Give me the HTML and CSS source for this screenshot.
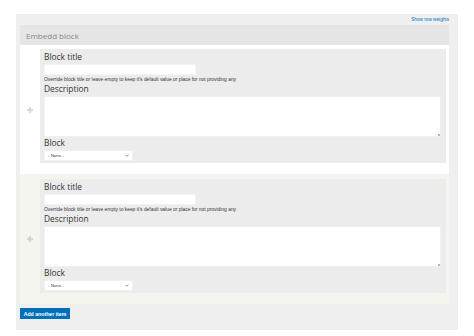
FILE: index.html
```html
<!DOCTYPE html>
<html lang="en">
    <head>
        <meta charset="utf-8">
        <meta name="viewport" content="width=device-width, initial-scale=1" />
        <title>Embedd block</title>
        <link rel="stylesheet" href="styles.css">
    </head>
    <body>
        <div class="field-wrapper">
            <div class="weights"><a href="#">Show row weights</a></div>
            <table class="field-table">
                <thead>
                <tr>
                    <th colspan="2">Embedd block</th>
                </tr>
                </thead>
                <tbody>
                <tr class="odd">
                    <td class="handle-cell">
                        <svg class="handle" width="6" height="6" viewBox="0 0 12 12">
                            <path d="M6 1v10M1 6h10" stroke="#b0b0b0" stroke-width="1.3"/>
                            <path d="M4.2 2.6 6 0.6 7.8 2.6M4.2 9.4 6 11.4 7.8 9.4M2.6 4.2 0.6 6 2.6 7.8M9.4 4.2 11.4 6 9.4 7.8" fill="none" stroke="#b0b0b0" stroke-width="1.1"/>
                        </svg>
                    </td>
                    <td class="item-cell">
                        <div class="panel">
                            <label class="label">Block title</label>
                            <input class="text-input" type="text">
                            <div class="help">Override block title or leave empty to keep it's default value or place for not providing any</div>
                            <label class="label">Description</label>
                            <div class="textarea"><textarea></textarea><span class="grip"></span></div>
                            <label class="label">Block</label>
                            <div class="select">
                                <span>- None -</span>
                                <svg width="4" height="3" viewBox="0 0 10 6"><path d="M1 1l4 4 4-4" fill="none" stroke="#666" stroke-width="1.8"/></svg>
                            </div>
                        </div>
                    </td>
                </tr>
                <tr class="even">
                    <td class="handle-cell">
                        <svg class="handle" width="6" height="6" viewBox="0 0 12 12">
                            <path d="M6 1v10M1 6h10" stroke="#b0b0b0" stroke-width="1.3"/>
                            <path d="M4.2 2.6 6 0.6 7.8 2.6M4.2 9.4 6 11.4 7.8 9.4M2.6 4.2 0.6 6 2.6 7.8M9.4 4.2 11.4 6 9.4 7.8" fill="none" stroke="#b0b0b0" stroke-width="1.1"/>
                        </svg>
                    </td>
                    <td class="item-cell">
                        <div class="panel">
                            <label class="label">Block title</label>
                            <input class="text-input" type="text">
                            <div class="help">Override block title or leave empty to keep it's default value or place for not providing any</div>
                            <label class="label">Description</label>
                            <div class="textarea"><textarea></textarea><span class="grip"></span></div>
                            <label class="label">Block</label>
                            <div class="select">
                                <span>- None -</span>
                                <svg width="4" height="3" viewBox="0 0 10 6"><path d="M1 1l4 4 4-4" fill="none" stroke="#666" stroke-width="1.8"/></svg>
                            </div>
                        </div>
                    </td>
                </tr>
                </tbody>
            </table>
            <button class="add-more" type="button">Add another item</button>
        </div>
    </body>
</html>
```

FILE: styles.css
```css
body {
    margin: 0;
    background: #fff;
    font-family: "Liberation Sans", Arial, sans-serif;
    color: #333;
}
.field-wrapper {
    margin: 14px 16px 4px;
    padding: 0 9px 11px 4px;
    background: #efefef;
}
.weights {
    text-align: right;
    height: 11px;
    line-height: 11px;
    font-size: 4.7px;
}
.weights a {
    color: #0074bd;
    text-decoration: none;
}
.field-table {
    width: 100%;
    border-collapse: collapse;
    border-spacing: 0;
}
.field-table th {
    height: 20px;
    padding: 0 6px;
    background: #e5e5e5;
    color: #888;
    font-family: "Open Sans", sans-serif;
    font-weight: normal;
    font-size: 8px;
    text-align: left;
}
.field-table td { padding: 0; }
.odd { background: #fff; }
.even { background: #f5f5f0; }
.handle-cell {
    width: 20px;
    text-align: center;
    vertical-align: middle;
}
.handle { display: block; margin: 0 auto; }
.item-cell { padding: 4px 3px 11px 0 !important; }
.even .item-cell { padding-top: 5px !important; }
.panel {
    background: #ececec;
    padding: 2px 5px 2px 4px;
    display: flex;
    flex-direction: column;
    align-items: flex-start;
}
.label {
    display: block;
    font-family: "Open Sans", sans-serif;
    font-size: 8.4px;
    line-height: 11px;
    color: #333;
}
.text-input {
    box-sizing: border-box;
    margin: 2px 0 0;
    width: 152px;
    height: 11px;
    border: 1px solid #f4f4f4;
    background: #fff;
    padding: 0;
}
.help {
    margin-top: 2px;
    font-size: 4.9px;
    line-height: 6px;
    color: #333;
    white-space: nowrap;
}
.textarea {
    position: relative;
    margin-top: 2px;
    width: 397px;
    height: 41px;
}
.textarea textarea {
    box-sizing: border-box;
    display: block;
    width: 100%;
    height: 100%;
    margin: 0;
    padding: 0;
    border: 1px solid #f0f0f0;
    background: #fff;
    resize: none;
}
.grip {
    position: absolute;
    right: 1px;
    bottom: 1px;
    width: 2px;
    height: 2px;
    background: #b5b5b5;
}
.select {
    box-sizing: border-box;
    margin-top: 2px;
    width: 89px;
    height: 11px;
    padding: 0 3px;
    display: flex;
    align-items: center;
    justify-content: space-between;
    background: #fff;
    border: 1px solid #f0f0f0;
    font-size: 4.4px;
    color: #444;
}
.add-more {
    display: block;
    margin-top: 4px;
    height: 11px;
    width: 50px;
    padding: 0;
    border: 0;
    background: #0071b8;
    color: #fff;
    font-family: "Liberation Sans", Arial, sans-serif;
    font-size: 5.2px;
    font-weight: bold;
}
```
